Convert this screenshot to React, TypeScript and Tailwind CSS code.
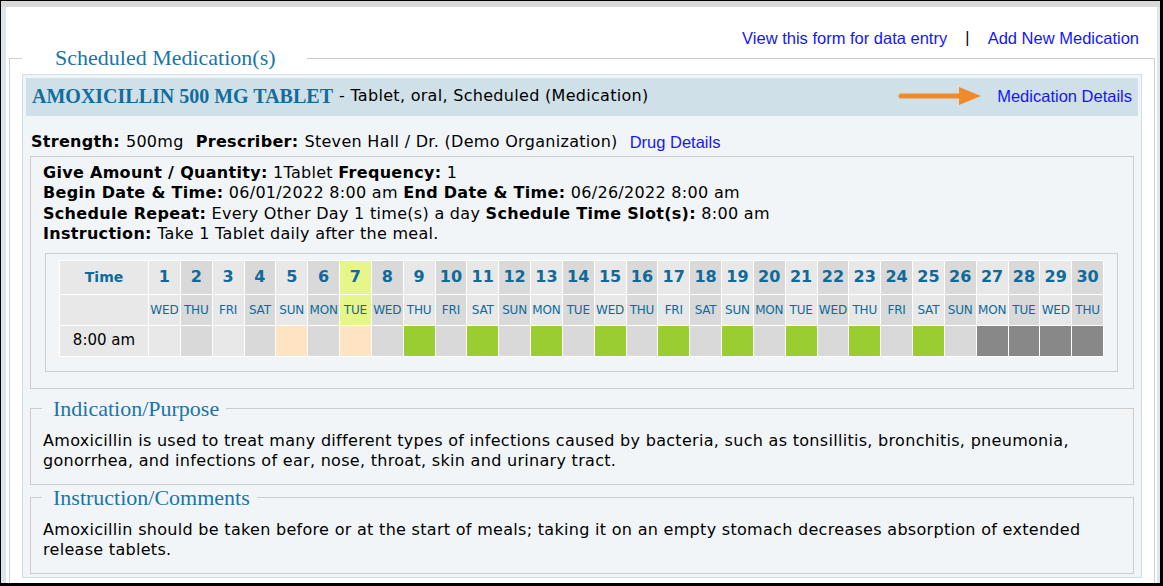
const DAY_NAMES = ['WED', 'THU', 'FRI', 'SAT', 'SUN', 'MON', 'TUE']
const DAYS = Array.from({ length: 30 }, (_, i) => i + 1)

const headBg = (d: number) => {
  if (d === 7) return 'bg-[#e6f68a]'
  return d % 2 === 0 ? 'bg-[#d9d9d9]' : 'bg-[#e8e8e8]'
}

const slotBg = (d: number) => {
  if (d >= 27) return 'bg-[#888888]'
  if (d === 5 || d === 7) return 'bg-[#ffe4c4]'
  if (d >= 9 && d % 2 === 1) return 'bg-[#9acd32]'
  return d % 2 === 0 ? 'bg-[#d9d9d9]' : 'bg-[#e8e8e8]'
}

const linkCls = "font-['Liberation_Sans',Arial,sans-serif] text-[16.5px] tracking-normal text-[#1515ff]"
const legendCls = "font-['Liberation_Serif',Georgia,serif] text-[22px] leading-[24px] tracking-normal text-[#1a75a9]"

const Arrow = () => (
  <svg width="84" height="20" viewBox="0 0 84 20" className="block">
    <line x1="3" y1="10" x2="64" y2="10" stroke="#f08a2a" strokeWidth="5" strokeLinecap="round" />
    <polygon points="61,1 83,10 61,19" fill="#f08a2a" />
  </svg>
)

const Calendar = () => (
  <div className="ml-[2px] mr-[3px] mt-[8px] border border-[#cccccc] bg-[#f1f5f8] px-[13px] pt-[6px] pb-[14px] tracking-normal">
    <div className="grid grid-cols-[88px_repeat(30,minmax(0,1fr))] grid-rows-[33px_30px_30px] gap-px p-px bg-white">
      <div className="bg-[#e8e8e8] flex items-center justify-center text-[14px] font-bold text-[#0f6a9c]">Time</div>
      {DAYS.map((d) => (
        <div key={'n' + d} className={`${headBg(d)} flex items-center justify-center text-[16px] font-bold text-[#0f6a9c]`}>
          {d}
        </div>
      ))}
      <div className="bg-[#e8e8e8]" />
      {DAYS.map((d) => (
        <div key={'w' + d} className={`${headBg(d)} flex items-center justify-center text-[12px] text-[#0f6a9c] tracking-[-0.2px]`}>
          {DAY_NAMES[(d - 1) % 7]}
        </div>
      ))}
      <div className="bg-[#e8e8e8] flex items-center justify-center text-[15px] text-black">8:00 am</div>
      {DAYS.map((d) => (
        <div key={'s' + d} className={slotBg(d)} />
      ))}
    </div>
  </div>
)

export default function App() {
  return (
    <div className="h-[586px] w-[1163px] overflow-hidden border-t border-l border-r-[3px] border-b-[3px] border-black bg-white flex flex-col font-['DejaVu_Sans',Verdana,sans-serif] text-black">
      <div className="h-[6px] bg-[#d8d8d8] shrink-0" />
      <div className="flex flex-1 min-h-0">
        <div className="w-[5px] bg-[#dce6ee] shrink-0" />
        <main className="flex-1 min-w-0 overflow-hidden pl-[3px] pr-[2px] tracking-[0.3px]">
          <div className="h-[39px] pt-[23px] pr-[16px] flex items-center justify-end gap-[18px]">
            <a className={linkCls}>View this form for data entry</a>
            <span className="font-['Liberation_Sans',Arial,sans-serif] text-[16px] text-black">|</span>
            <a className={linkCls}>Add New Medication</a>
          </div>

          <fieldset className="border border-[#cfcfcf] px-[12px] pb-[20px]">
            <legend className={`${legendCls} pl-[33px] pr-[31px]`}>Scheduled Medication(s)</legend>

            <div className="mt-[4px] border border-[#cde0ea] bg-[#f1f5f8] p-[3px]">
              <div className="h-[38px] bg-[#cfe0e9] flex items-center pl-[6px] pr-[6px] pb-[2px]">
                <span className="font-['Liberation_Serif',Georgia,serif] text-[20px] font-bold tracking-normal text-[#106d9d]">
                  AMOXICILLIN 500 MG TABLET
                </span>
                <span className="ml-[6px] text-[16px]">- Tablet, oral, Scheduled (Medication)</span>
                <div className="ml-auto flex items-center gap-[15px]">
                  <Arrow />
                  <a className={linkCls}>Medication Details</a>
                </div>
              </div>

              <div className="mt-[16px] pl-[5px] text-[16px] leading-[20px] flex items-center">
                <b>Strength:</b>
                <span className="ml-[6px]">500mg</span>
                <b className="ml-[12px]">Prescriber:</b>
                <span className="ml-[6px]">Steven Hall / Dr. (Demo Organization)</span>
                <a className={`${linkCls} ml-[12px]`}>Drug Details</a>
              </div>

              <fieldset className="mx-[4px] mt-[4px] border border-[#cccccc] pl-[12px] pr-[12px] pt-[6px] pb-[16px]">
                <div className="text-[16px] leading-[20.4px]">
                  <div><b>Give Amount / Quantity:</b> 1Tablet <b>Frequency:</b> 1</div>
                  <div><b>Begin Date &amp; Time:</b> 06/01/2022 8:00 am <b>End Date &amp; Time:</b> 06/26/2022 8:00 am</div>
                  <div><b>Schedule Repeat:</b> Every Other Day 1 time(s) a day <b>Schedule Time Slot(s):</b> 8:00 am</div>
                  <div><b>Instruction:</b> Take 1 Tablet daily after the meal.</div>
                </div>
                <Calendar />
              </fieldset>

              <fieldset className="mx-[4px] mt-[8px] border border-[#cccccc] pl-[11px] pr-[12px] pt-[10px] pb-[13px]">
                <legend className={`${legendCls} pl-[11px] pr-[7px]`}>Indication/Purpose</legend>
                <p className="pl-px text-[16px] leading-[20px] whitespace-nowrap">
                  Amoxicillin is used to treat many different types of infections caused by bacteria, such as tonsillitis, bronchitis, pneumonia,
                  <br />
                  gonorrhea, and infections of ear, nose, throat, skin and urinary tract.
                </p>
              </fieldset>

              <fieldset className="mx-[4px] mt-px border border-[#cccccc] pl-[11px] pr-[12px] pt-[10px] pb-[13px]">
                <legend className={`${legendCls} pl-[11px] pr-[7px]`}>Instruction/Comments</legend>
                <p className="pl-px text-[16px] leading-[20px] whitespace-nowrap">
                  Amoxicillin should be taken before or at the start of meals; taking it on an empty stomach decreases absorption of extended
                  <br />
                  release tablets.
                </p>
              </fieldset>
            </div>
          </fieldset>
        </main>
        <div className="w-[3px] bg-[#dce6ee] shrink-0" />
      </div>
    </div>
  )
}
